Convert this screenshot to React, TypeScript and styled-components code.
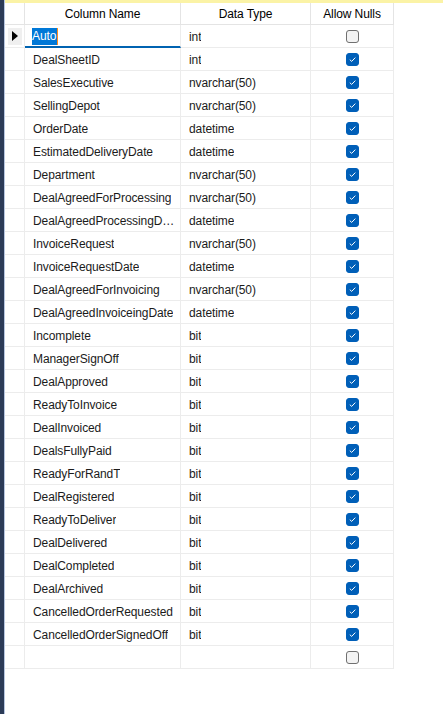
import React from "react";
import styled, { createGlobalStyle } from "styled-components";

const GlobalStyle = createGlobalStyle`
  html, body {
    margin: 0;
    padding: 0;
    background: #ffffff;
  }
  body {
    font-family: "Liberation Sans", Arial, sans-serif;
  }
`;

type Column = { name: string; type: string; nulls: boolean };

const COLUMNS: Column[] = [
  { name: "Auto", type: "int", nulls: false },
  { name: "DealSheetID", type: "int", nulls: true },
  { name: "SalesExecutive", type: "nvarchar(50)", nulls: true },
  { name: "SellingDepot", type: "nvarchar(50)", nulls: true },
  { name: "OrderDate", type: "datetime", nulls: true },
  { name: "EstimatedDeliveryDate", type: "datetime", nulls: true },
  { name: "Department", type: "nvarchar(50)", nulls: true },
  { name: "DealAgreedForProcessing", type: "nvarchar(50)", nulls: true },
  { name: "DealAgreedProcessingDate", type: "datetime", nulls: true },
  { name: "InvoiceRequest", type: "nvarchar(50)", nulls: true },
  { name: "InvoiceRequestDate", type: "datetime", nulls: true },
  { name: "DealAgreedForInvoicing", type: "nvarchar(50)", nulls: true },
  { name: "DealAgreedInvoiceingDate", type: "datetime", nulls: true },
  { name: "Incomplete", type: "bit", nulls: true },
  { name: "ManagerSignOff", type: "bit", nulls: true },
  { name: "DealApproved", type: "bit", nulls: true },
  { name: "ReadyToInvoice", type: "bit", nulls: true },
  { name: "DealInvoiced", type: "bit", nulls: true },
  { name: "DealsFullyPaid", type: "bit", nulls: true },
  { name: "ReadyForRandT", type: "bit", nulls: true },
  { name: "DealRegistered", type: "bit", nulls: true },
  { name: "ReadyToDeliver", type: "bit", nulls: true },
  { name: "DealDelivered", type: "bit", nulls: true },
  { name: "DealCompleted", type: "bit", nulls: true },
  { name: "DealArchived", type: "bit", nulls: true },
  { name: "CancelledOrderRequested", type: "bit", nulls: true },
  { name: "CancelledOrderSignedOff", type: "bit", nulls: true },
];

const Window = styled.div`
  display: flex;
  height: 714px;
  width: 443px;
  overflow: hidden;
`;

const SideBar = styled.div`
  width: 4px;
  flex-shrink: 0;
  background: #2c3b57;
  border-right: 1px solid #b7c6e0;
`;

const Main = styled.div`
  flex: 1;
  display: flex;
  flex-direction: column;
`;

const TopStrip = styled.div`
  height: 3px;
  background: #fbf3a6;
`;

const Grid = styled.div`
  display: flex;
  flex-direction: column;
  width: 389px;
  font-size: 12px;
  letter-spacing: -0.1px;
  color: #1b1b1b;
`;

const Row = styled.div<{ $head?: boolean }>`
  display: grid;
  grid-template-columns: 20px 156px 130px 83px;
  height: ${(p) => (p.$head ? 22 : 23)}px;
`;

const HeadCell = styled.div`
  box-sizing: border-box;
  display: flex;
  align-items: center;
  justify-content: center;
  color: #000;
  border-right: 1px solid #e4e4e4;
  border-bottom: 1px solid #e4e4e4;
`;

const Cell = styled.div<{ $editing?: boolean }>`
  box-sizing: border-box;
  display: flex;
  align-items: center;
  padding: 1px 4px 0 8px;
  border-right: 1px solid #ececec;
  border-bottom: ${(p) => (p.$editing ? "2px solid #0063b1" : "1px solid #ececec")};
  min-width: 0;
`;

const CellText = styled.span`
  white-space: nowrap;
  overflow: hidden;
  text-overflow: ellipsis;
`;

const RowHeadCell = styled.div`
  box-sizing: border-box;
  display: flex;
  align-items: center;
  padding: 0 2px 0 3px;
  border-right: 1px solid #ececec;
  border-bottom: 1px solid #ececec;
`;

const CheckCell = styled.div`
  box-sizing: border-box;
  display: flex;
  align-items: center;
  justify-content: center;
  border-right: 1px solid #ececec;
  border-bottom: 1px solid #ececec;
`;

const CurrentMarker = styled.div`
  flex: 1;
  height: 17px;
  background: #efefef;
  display: flex;
  align-items: center;
  justify-content: center;
`;

const Triangle = styled.div`
  width: 0;
  height: 0;
  border-top: 5px solid transparent;
  border-bottom: 5px solid transparent;
  border-left: 6px solid #000;
`;

const Selected = styled.span`
  background: #0078d7;
  color: #fff;
  padding: 1px 1px 2px 0;
  margin-left: -1px;
  border-right: 1px solid #ff8c1a;
`;

const Box = styled.span<{ $checked: boolean }>`
  display: inline-flex;
  align-items: center;
  justify-content: center;
  width: 13px;
  height: 13px;
  box-sizing: border-box;
  border-radius: 3px;
  background: ${(p) => (p.$checked ? "#005fb8" : "#f3f3f3")};
  border: 1px solid ${(p) => (p.$checked ? "#005fb8" : "#707070")};
`;

const CheckBox = ({ checked }: { checked: boolean }) => (
  <Box $checked={checked}>
    {checked && (
      <svg width="9" height="9" viewBox="0 0 9 9">
        <path d="M1.8 4.7 L3.7 6.4 L7.3 2.6" fill="none" stroke="#ffffff" strokeWidth="1" />
      </svg>
    )}
  </Box>
);

export default function App() {
  return (
    <>
      <GlobalStyle />
      <Window>
        <SideBar />
        <Main>
          <TopStrip />
          <Grid>
            <Row $head>
              <HeadCell />
              <HeadCell>Column Name</HeadCell>
              <HeadCell>Data Type</HeadCell>
              <HeadCell>Allow Nulls</HeadCell>
            </Row>
            {COLUMNS.map((col, i) => (
              <Row key={col.name}>
                <RowHeadCell>
                  {i === 0 && (
                    <CurrentMarker>
                      <Triangle />
                    </CurrentMarker>
                  )}
                </RowHeadCell>
                <Cell $editing={i === 0}>
                  {i === 0 ? <Selected>{col.name}</Selected> : <CellText>{col.name}</CellText>}
                </Cell>
                <Cell>
                  <CellText>{col.type}</CellText>
                </Cell>
                <CheckCell>
                  <CheckBox checked={col.nulls} />
                </CheckCell>
              </Row>
            ))}
            <Row>
              <RowHeadCell />
              <Cell />
              <Cell />
              <CheckCell>
                <CheckBox checked={false} />
              </CheckCell>
            </Row>
          </Grid>
        </Main>
      </Window>
    </>
  );
}
